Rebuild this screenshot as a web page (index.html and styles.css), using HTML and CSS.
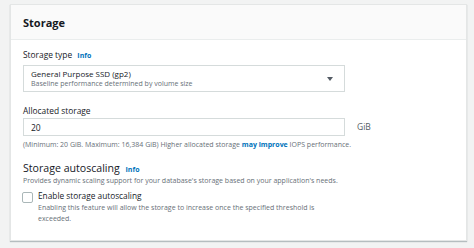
FILE: index.html
```html
<!DOCTYPE html>
<html lang="en">
	<head>
		<meta charset="UTF-8" />
		<title>Storage</title>
		<link rel="stylesheet" href="styles.css">
	</head>
	<body>
		<div class="panel">
			<div class="panel-header">
				<h2>Storage</h2>
			</div>
			<div class="panel-body">
				<div class="field">
					<label class="label">Storage type <a class="info">Info</a></label>
					<div class="select">
						<div>
							<div class="select-title">General Purpose SSD (gp2)</div>
							<div class="select-desc">Baseline performance determined by volume size</div>
						</div>
						<span class="caret"></span>
					</div>
				</div>

				<div class="field">
					<label class="label">Allocated storage</label>
					<div class="input-row">
						<div class="input">20</div>
						<span class="unit">GiB</span>
					</div>
					<div class="hint">(Minimum: 20 GiB. Maximum: 16,384 GiB) Higher allocated storage <b class="link">may improve</b> IOPS performance.</div>
				</div>

				<div class="section">
					<h3>Storage autoscaling <a class="info">Info</a></h3>
					<div class="section-desc">Provides dynamic scaling support for your database's storage based on your application's needs.</div>
					<div class="check">
						<span class="box"></span>
						<div>
							<div class="check-title">Enable storage autoscaling</div>
							<div class="check-desc">Enabling this feature will allow the storage to increase once the specified threshold is exceeded.</div>
						</div>
					</div>
				</div>
			</div>
		</div>
	</body>
</html>
```

FILE: styles.css
```css
body {
	margin: 0;
	padding: 4px 7px 5px 10px;
	background: #f2f3f3;
	font-family: "Open Sans", sans-serif;
	color: #16191f;
}
.panel {
	background: #fff;
	border: 1px solid #e4e6e6;
	box-shadow: 0 1px 1px rgba(0, 28, 36, 0.25);
	height: 237px;
	box-sizing: border-box;
}
.panel-header {
	background: #fafafa;
	border-bottom: 1px solid #eaeded;
	height: 34px;
	display: flex;
	align-items: center;
	padding: 0 12px;
}
h2 {
	margin: 0;
	font-size: 11px;
	font-weight: 700;
}
.panel-body {
	padding: 9px 12px;
}
.field {
	margin-bottom: 13px;
}
.label {
	display: block;
	font-size: 8.4px;
	line-height: 12px;
	margin-bottom: 3px;
}
.field + .field .label {
	margin-bottom: 1px;
}
.info {
	color: #0073bb;
	font-weight: 700;
	font-size: 7px;
	margin-left: 3px;
}
.select {
	width: 322px;
	height: 27px;
	box-sizing: border-box;
	border: 1px solid #d5dbdb;
	display: flex;
	align-items: center;
	justify-content: space-between;
	padding: 0 10px 0 7px;
}
.select-title {
	font-size: 8px;
	line-height: 11px;
}
.select-desc {
	font-size: 7px;
	color: #687078;
	line-height: 10px;
}
.caret {
	border-left: 3px solid transparent;
	border-right: 3px solid transparent;
	border-top: 4px solid #545b64;
	margin-right: 1px;
}
.input-row {
	display: flex;
	align-items: center;
}
.input {
	width: 322px;
	height: 18px;
	box-sizing: border-box;
	border: 1px solid #d5dbdb;
	font-size: 8.5px;
	padding: 0 7px;
	display: flex;
	align-items: center;
}
.unit {
	font-size: 8.5px;
	color: #545b64;
	margin-left: 12px;
	padding-bottom: 2px;
}
.hint {
	font-size: 7px;
	color: #687078;
	margin-top: 4px;
}
.link {
	color: #0073bb;
}
.section {
	margin-top: 9px;
}
h3 {
	margin: 0;
	font-size: 10.6px;
	font-weight: 400;
	line-height: 12px;
}
.section-desc {
	font-size: 7px;
	color: #687078;
	margin-top: 0;
}
.check {
	display: flex;
	align-items: flex-start;
	margin-top: 5px;
}
.box {
	width: 9px;
	height: 9px;
	border: 1px solid #aab7b8;
	border-radius: 2px;
	margin: 2px 5px 0 -1px;
	flex-shrink: 0;
}
.check-title {
	font-size: 8.3px;
	line-height: 12px;
}
.check-desc {
	font-size: 7px;
	color: #687078;
	line-height: 11px;
	width: 300px;
}
```
